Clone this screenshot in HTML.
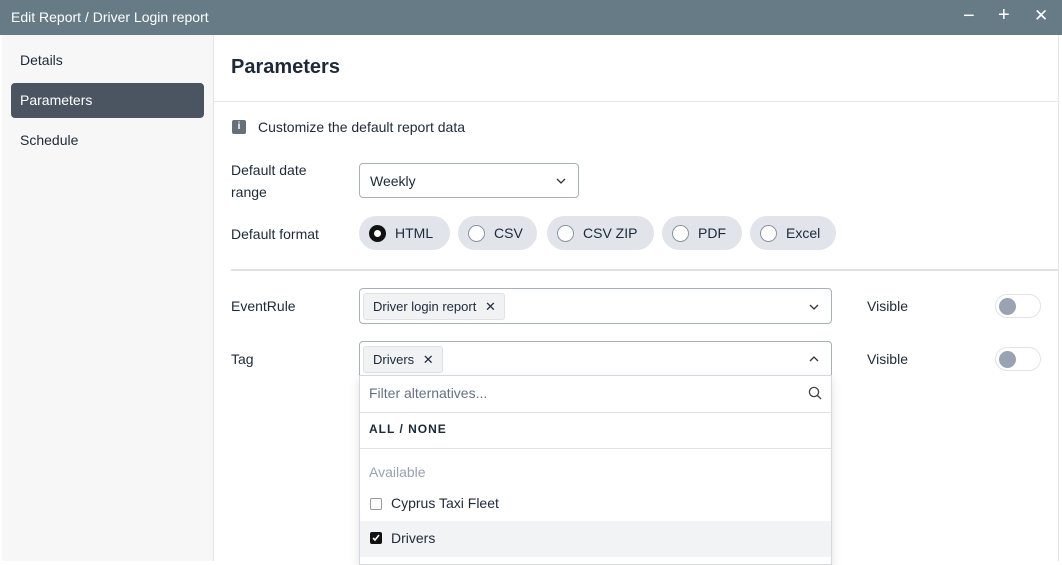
<!DOCTYPE html>
<html><head><style>
*{box-sizing:border-box;margin:0;padding:0}
body{width:1062px;height:561px;overflow:hidden;background:#fff;font-family:"Liberation Sans",sans-serif;color:#1d2939;font-size:14px;position:relative}
.a{position:absolute}
.title{left:0;top:0;width:1062px;height:35px;background:#667b86;color:#fff;font-size:14px;padding:9px 0 0 11px}
.side{left:2px;top:35px;width:212px;height:526px;background:#f7f7f8;border-right:1px solid #e3e5e8}
.pill{background:#e1e4ea;border-radius:17px;height:34px;top:216px;font-size:14px;padding:9px 0 0 36px}
.rad{position:absolute;left:10px;top:9px;width:17px;height:17px;border-radius:50%;border:1px solid #8a94a0;background:#fff}
.box{border:1px solid #a9b0b9;border-radius:4px;background:#fff}
.chip{background:#f1f2f4;border:1px solid #dfe2e6;border-radius:3px;font-size:13px;padding:5px 8px 0 9px;height:27px}
.tog{width:46px;height:24px;border:1px solid #e0e3ea;border-radius:12px;background:#fff}
.tog:after{content:"";position:absolute;left:3px;top:3px;width:17px;height:17px;border-radius:50%;background:#9aa3b1}
</style></head><body>
<div class="a title">Edit Report / Driver Login report<span class="a" style="left:963px;top:5px;font-size:20px">−</span><span class="a" style="left:998px;top:4px;font-size:20px">+</span><span class="a" style="left:1034px;top:6px;font-size:17px">✕</span></div>
<div class="a side">
<div class="a" style="left:18px;top:17px">Details</div>
<div class="a" style="left:9px;top:48px;width:193px;height:35px;background:#4b5561;border-radius:4px;color:#fff;padding:9px 0 0 9px">Parameters</div>
<div class="a" style="left:18px;top:97px">Schedule</div>
</div>
<div class="a" style="left:1058px;top:35px;width:1px;height:526px;background:#e3e5e8"></div>
<div class="a" style="left:231px;top:56px;font-size:20px;font-weight:bold">Parameters</div>
<div class="a" style="left:214px;top:101px;width:844px;height:1px;background:#e3e5e8"></div>
<div class="a" style="left:232px;top:120px;width:14px;height:14px;background:#667078;color:#fff;font-size:10px;font-weight:bold;text-align:center;line-height:14px;border-radius:2px">i</div>
<div class="a" style="left:258px;top:119px">Customize the default report data</div>
<div class="a" style="left:231px;top:159px;line-height:22px">Default date<br>range</div>
<div class="a box" style="left:359px;top:163px;width:220px;height:35px;padding:9px 0 0 10px">Weekly<svg class="a" style="left:196px;top:14px" width="10" height="6"><path d="M1 1l4 4 4-4" fill="none" stroke="#333" stroke-width="1.3"/></svg></div>
<div class="a" style="left:231px;top:226px">Default format</div>
<div class="a pill" style="left:359px;width:91px"><span class="rad" style="border:5px solid #111"></span>HTML</div>
<div class="a pill" style="left:458px;width:79px"><span class="rad"></span>CSV</div>
<div class="a pill" style="left:547px;width:107px"><span class="rad"></span>CSV ZIP</div>
<div class="a pill" style="left:662px;width:80px"><span class="rad"></span>PDF</div>
<div class="a pill" style="left:750px;width:86px"><span class="rad"></span>Excel</div>
<div class="a" style="left:231px;top:269px;width:827px;height:2px;background:#dfe1e4"></div>
<div class="a" style="left:231px;top:298px">EventRule</div>
<div class="a box" style="left:359px;top:288px;width:473px;height:36px"><div class="a chip" style="left:3px;top:4px">Driver login report <span style="margin-left:5px">✕</span></div><svg class="a" style="left:449px;top:15px" width="10" height="6"><path d="M1 1l4 4 4-4" fill="none" stroke="#333" stroke-width="1.3"/></svg></div>
<div class="a" style="left:867px;top:298px">Visible</div><div class="a tog" style="left:995px;top:294px"></div>
<div class="a" style="left:231px;top:351px">Tag</div>
<div class="a box" style="left:359px;top:341px;width:473px;height:36px;border-radius:4px 4px 0 0"><div class="a chip" style="left:3px;top:4px">Drivers <span style="margin-left:5px">✕</span></div><svg class="a" style="left:449px;top:14px" width="10" height="6"><path d="M1 5l4-4 4 4" fill="none" stroke="#333" stroke-width="1.3"/></svg></div>
<div class="a" style="left:867px;top:351px">Visible</div><div class="a tog" style="left:995px;top:347px"></div>
<div class="a" style="left:359px;top:375px;width:473px;height:190px;background:#fff;border:1px solid #d5d9de;box-shadow:0 4px 10px rgba(0,0,0,.12)">
<div class="a" style="left:9px;top:9px;color:#667085">Filter alternatives...</div>
<svg class="a" style="left:448px;top:10px" width="14" height="14"><circle cx="6" cy="6" r="4.6" fill="none" stroke="#444" stroke-width="1.3"/><path d="M9.5 9.5l3.5 3.5" stroke="#444" stroke-width="1.3"/></svg>
<div class="a" style="left:0;top:36px;width:471px;height:1px;background:#dfe2e6"></div>
<div class="a" style="left:9px;top:46px;font-size:12px;font-weight:bold;letter-spacing:1px">ALL / NONE</div>
<div class="a" style="left:0;top:72px;width:471px;height:1px;background:#dfe2e6"></div>
<div class="a" style="left:9px;top:88px;color:#98a2b3">Available</div>
<div class="a" style="left:10px;top:122px;width:12px;height:12px;border:1px solid #999;border-radius:2px"></div>
<div class="a" style="left:31px;top:119px">Cyprus Taxi Fleet</div>
<div class="a" style="left:0;top:145px;width:471px;height:36px;background:#f2f3f5"></div>
<div class="a" style="left:10px;top:156px;width:12px;height:12px;background:#111;border-radius:2px"><svg class="a" style="left:2px;top:2px" width="8" height="8"><path d="M1 4l2 2 4-5" fill="none" stroke="#fff" stroke-width="1.6"/></svg></div>
<div class="a" style="left:31px;top:154px">Drivers</div>
</div>
</body></html>
